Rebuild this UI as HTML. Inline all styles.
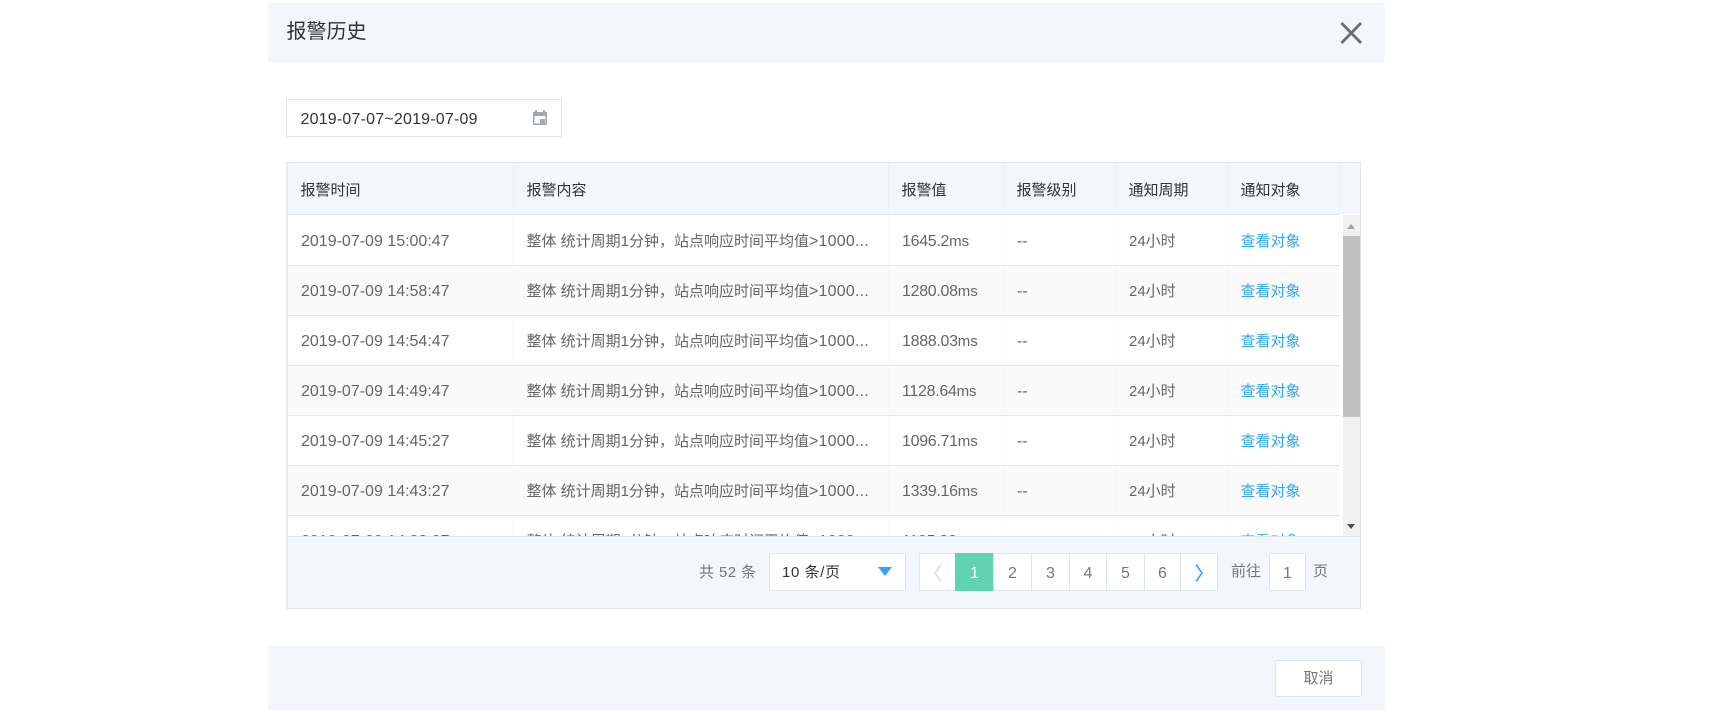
<!DOCTYPE html>
<html><head><meta charset="utf-8">
<style>
html,body{margin:0;padding:0;background:#fff;}
body{width:1712px;height:712px;position:relative;overflow:hidden;font-family:"Liberation Sans","Noto Sans CJK SC",sans-serif;color:#666;}
.a{position:absolute;box-sizing:border-box;}
.t{position:absolute;white-space:nowrap;line-height:20px;}
.h{font-size:15px;color:#333;}
.n{font-size:16px;color:#666;}
.v{font-size:16px;color:#666;letter-spacing:-.3px;}
.v i{font-style:normal;font-size:15px;letter-spacing:0;}
.c{font-size:15px;color:#666;}
.c i{font-style:normal;font-size:16px;letter-spacing:.2px;}
.l{font-size:15px;color:#2ea7f7;}
.p{position:absolute;top:553px;height:38px;background:#fff;border:1px solid #dfe6ee;box-sizing:border-box;text-align:center;line-height:40px;font-size:16px;color:#777;}
.s{position:absolute;width:1px;top:0;height:321px;background:#f6f7f9;}
.r{position:absolute;width:1px;top:163px;height:51px;background:#eef2f7;}
</style></head><body>
<div class="a" style="left:268px;top:3px;width:1117px;height:59px;background:#f3f6fb"></div>
<div class="t" style="left:286.5px;top:19px;font-size:20px;line-height:26px;color:#333">报警历史</div>
<svg class="a" style="left:1339px;top:21px" width="24" height="24" viewBox="0 0 24 24"><path d="M2.5 2L22 22M22 2L2.5 22" stroke="#6b6f75" stroke-width="2.8" fill="none"/></svg>

<div class="a" style="left:286px;top:99px;width:276px;height:38px;border:1px solid #dfe6ee;background:#fff"></div>
<div class="t" style="left:300.5px;top:110px;font-size:16px;color:#333;letter-spacing:.2px">2019-07-07~2019-07-09</div>
<svg class="a" style="left:533px;top:110px" width="14" height="15" viewBox="0 0 14 15"><path d="M0 2H14V15H0Z" fill="#a3a8ad"/><path d="M2 0H4V3H2ZM10 0H12V3H10Z" fill="#a3a8ad"/><path d="M1.5 6H12.5V13.5H1.5Z" fill="#fff"/><path d="M7 9H12V13.5H7Z" fill="#a3a8ad"/></svg>

<!-- table -->
<div class="a" style="left:286px;top:162px;width:1075px;height:447px;border:1px solid #dfe6ee;border-left:2px solid #e6ebf2;background:#fff"></div>
<div class="a" style="left:288px;top:163px;width:1072px;height:51px;background:#f3f6fb"></div>
<div class="a" style="left:288px;top:214px;width:1051px;height:1px;background:#dfe6ee"></div>
<div class="r" style="left:513px"></div>
<div class="r" style="left:888px"></div>
<div class="r" style="left:1003px"></div>
<div class="r" style="left:1115px"></div>
<div class="r" style="left:1227px"></div>
<div class="r" style="left:1339px"></div>
<div class="t h" style="left:300.5px;top:181px">报警时间</div>
<div class="t h" style="left:526.5px;top:181px">报警内容</div>
<div class="t h" style="left:901.5px;top:181px">报警值</div>
<div class="t h" style="left:1016.5px;top:181px">报警级别</div>
<div class="t h" style="left:1128.5px;top:181px">通知周期</div>
<div class="t h" style="left:1240.5px;top:181px">通知对象</div>

<!-- rows -->
<div class="a" style="left:288px;top:215px;width:1051px;height:321px;overflow:hidden">
  <div class="a" style="left:0;top:50px;width:1051px;height:50px;background:#fafafa"></div>
  <div class="a" style="left:0;top:150px;width:1051px;height:50px;background:#fafafa"></div>
  <div class="a" style="left:0;top:250px;width:1051px;height:50px;background:#fafafa"></div>
  <div class="s" style="left:225px"></div><div class="s" style="left:600px"></div><div class="s" style="left:715px"></div><div class="s" style="left:827px"></div><div class="s" style="left:939px"></div>
  <div class="a" style="left:0;top:50px;width:1051px;height:1px;background:#dfe6ee"></div>
  <div class="a" style="left:0;top:100px;width:1051px;height:1px;background:#dfe6ee"></div>
  <div class="a" style="left:0;top:150px;width:1051px;height:1px;background:#dfe6ee"></div>
  <div class="a" style="left:0;top:200px;width:1051px;height:1px;background:#dfe6ee"></div>
  <div class="a" style="left:0;top:250px;width:1051px;height:1px;background:#dfe6ee"></div>
  <div class="a" style="left:0;top:300px;width:1051px;height:1px;background:#dfe6ee"></div>

  <div class="t n" style="left:13px;top:17px">2019-07-09 15:00:47</div><div class="t c" style="left:238.5px;top:17px">整体 统计周期1分钟，站点响应时间平均值<i>&gt;1000...</i></div><div class="t v" style="left:614px;top:17px">1645.2<i>ms</i></div><div class="t n" style="left:729px;top:17px">--</div><div class="t c" style="left:841px;top:17px">24小时</div><div class="t l" style="left:952.5px;top:17px">查看对象</div>

  <div class="t n" style="left:13px;top:67px">2019-07-09 14:58:47</div><div class="t c" style="left:238.5px;top:67px">整体 统计周期1分钟，站点响应时间平均值<i>&gt;1000...</i></div><div class="t v" style="left:614px;top:67px">1280.08<i>ms</i></div><div class="t n" style="left:729px;top:67px">--</div><div class="t c" style="left:841px;top:67px">24小时</div><div class="t l" style="left:952.5px;top:67px">查看对象</div>

  <div class="t n" style="left:13px;top:117px">2019-07-09 14:54:47</div><div class="t c" style="left:238.5px;top:117px">整体 统计周期1分钟，站点响应时间平均值<i>&gt;1000...</i></div><div class="t v" style="left:614px;top:117px">1888.03<i>ms</i></div><div class="t n" style="left:729px;top:117px">--</div><div class="t c" style="left:841px;top:117px">24小时</div><div class="t l" style="left:952.5px;top:117px">查看对象</div>

  <div class="t n" style="left:13px;top:167px">2019-07-09 14:49:47</div><div class="t c" style="left:238.5px;top:167px">整体 统计周期1分钟，站点响应时间平均值<i>&gt;1000...</i></div><div class="t v" style="left:614px;top:167px">1128.64<i>ms</i></div><div class="t n" style="left:729px;top:167px">--</div><div class="t c" style="left:841px;top:167px">24小时</div><div class="t l" style="left:952.5px;top:167px">查看对象</div>

  <div class="t n" style="left:13px;top:217px">2019-07-09 14:45:27</div><div class="t c" style="left:238.5px;top:217px">整体 统计周期1分钟，站点响应时间平均值<i>&gt;1000...</i></div><div class="t v" style="left:614px;top:217px">1096.71<i>ms</i></div><div class="t n" style="left:729px;top:217px">--</div><div class="t c" style="left:841px;top:217px">24小时</div><div class="t l" style="left:952.5px;top:217px">查看对象</div>

  <div class="t n" style="left:13px;top:267px">2019-07-09 14:43:27</div><div class="t c" style="left:238.5px;top:267px">整体 统计周期1分钟，站点响应时间平均值<i>&gt;1000...</i></div><div class="t v" style="left:614px;top:267px">1339.16<i>ms</i></div><div class="t n" style="left:729px;top:267px">--</div><div class="t c" style="left:841px;top:267px">24小时</div><div class="t l" style="left:952.5px;top:267px">查看对象</div>

  <div class="t n" style="left:13px;top:317px">2019-07-09 14:38:27</div><div class="t c" style="left:238.5px;top:317px">整体 统计周期1分钟，站点响应时间平均值<i>&gt;1000...</i></div><div class="t v" style="left:614px;top:317px">1105.30<i>ms</i></div><div class="t c" style="left:841px;top:317px">24小时</div><div class="t l" style="left:952.5px;top:317px">查看对象</div>
</div>

<!-- scrollbar -->
<div class="a" style="left:1343px;top:215px;width:17px;height:321px;background:#f1f1f1"></div>
<div class="a" style="left:1343px;top:236px;width:17px;height:181px;background:#c1c1c1"></div>
<div class="a" style="left:1347px;top:224px;width:0;height:0;border-left:4px solid transparent;border-right:4px solid transparent;border-bottom:5px solid #a3a3a3"></div>
<div class="a" style="left:1347px;top:524px;width:0;height:0;border-left:4px solid transparent;border-right:4px solid transparent;border-top:5px solid #505050"></div>

<!-- pager bar -->
<div class="a" style="left:288px;top:536px;width:1072px;height:72px;background:#f3f6fb;border-top:1px solid #dfe6ee"></div>
<div class="t" style="left:699px;top:563px;font-size:15px;color:#777;letter-spacing:.4px">共 52 条</div>
<div class="a" style="left:769px;top:553px;width:137px;height:38px;background:#fff;border:1px solid #dfe6ee;border-radius:2px"></div>
<div class="t" style="left:782px;top:563px;font-size:15px;color:#333;letter-spacing:.6px">10 条/页</div>
<div class="a" style="left:878px;top:567px;width:0;height:0;border-left:7.5px solid transparent;border-right:7.5px solid transparent;border-top:9px solid #2ba6ff"></div>

<div class="p" style="left:919px;width:37px"><svg style="position:absolute;left:12px;top:9px" width="11" height="20" viewBox="0 0 11 20"><path d="M9 1.5L3 10L9 18.5" stroke="#e3e3e3" stroke-width="2" fill="none"/></svg></div>
<div class="p" style="left:955px;width:39px;background:#5fd3b3;border-color:#5fd3b3;color:#fff">1</div>
<div class="p" style="left:993px;width:39px">2</div>
<div class="p" style="left:1031px;width:39px">3</div>
<div class="p" style="left:1069px;width:38px">4</div>
<div class="p" style="left:1106px;width:39px">5</div>
<div class="p" style="left:1144px;width:37px">6</div>
<div class="p" style="left:1180px;width:38px"><svg style="position:absolute;left:13px;top:9px" width="11" height="20" viewBox="0 0 11 20"><path d="M2 1.5L8 10L2 18.5" stroke="#2ba6ff" stroke-width="1.6" fill="none"/></svg></div>
<div class="t" style="left:1231px;top:562px;font-size:15px;color:#777">前往</div>
<div class="p" style="left:1269px;width:37px;border-radius:2px">1</div>
<div class="t" style="left:1313px;top:562px;font-size:15px;color:#777">页</div>

<!-- footer -->
<div class="a" style="left:268px;top:646px;width:1117px;height:64px;background:#f3f6fb"></div>
<div class="a" style="left:1275px;top:660px;width:87px;height:37px;background:#fff;border:1px solid #dfe6ee;border-radius:3px;text-align:center;line-height:35px;font-size:15px;color:#777">取消</div>
</body></html>
